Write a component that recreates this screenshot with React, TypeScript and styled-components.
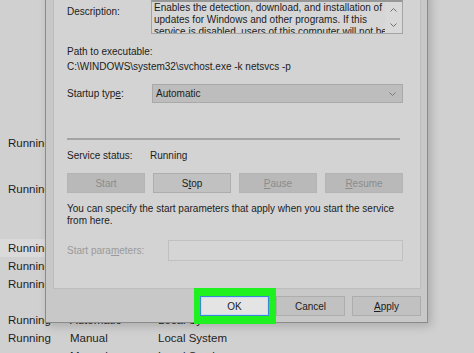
import React from "react";
import styled, { createGlobalStyle } from "styled-components";

const GlobalStyle = createGlobalStyle`
  html, body {
    margin: 0;
    padding: 0;
  }
  body {
    background: #d0d0d0;
    font-family: "Liberation Sans", Arial, sans-serif;
    overflow: hidden;
  }
`;

const Desktop = styled.div`
  position: relative;
  width: 474px;
  height: 353px;
  overflow: hidden;
  background: #d0d0d0;
`;

const ServiceList = styled.div`
  padding-top: 134px;
  width: 428px;
`;

const ServiceRow = styled.div<{ gap: number; selected?: boolean }>`
  display: grid;
  grid-template-columns: 62px 88px 1fr;
  height: 18px;
  align-items: center;
  margin-top: ${(p) => p.gap}px;
  padding-left: 8px;
  font-size: 11.5px;
  color: #1e1e1e;
  white-space: nowrap;
  background: ${(p) => (p.selected ? "#dadada" : "transparent")};
`;

const Dialog = styled.div`
  position: absolute;
  left: 45px;
  top: -10px;
  width: 383px;
  box-sizing: border-box;
  border: 1px solid #8b8b8b;
  background: #c8c8c8;
  padding: 0 6px 0 7px;
  box-shadow: 3px 3px 9px rgba(0, 0, 0, 0.18);
  font-size: 10px;
  color: #1c1c1c;
`;

const Panel = styled.div`
  height: 298px;
  box-sizing: border-box;
  background: #d3d3d3;
  border: 1px solid #bdbdbd;
  border-top: none;
  padding: 9px 16px 0 13px;
  display: flex;
  flex-direction: column;
`;

const Line = styled.div`
  line-height: 12px;
  white-space: nowrap;
`;

const DescRow = styled.div`
  display: flex;
  align-items: flex-start;
`;

const FieldLabel = styled.div<{ width: number; muted?: boolean }>`
  width: ${(p) => p.width}px;
  flex: none;
  line-height: 12px;
  white-space: nowrap;
  color: ${(p) => (p.muted ? "#9a9a9a" : "#1c1c1c")};
`;

const DescLabel = styled(FieldLabel)`
  margin-top: 6px;
`;

const DescBox = styled.div`
  width: 252px;
  height: 34px;
  box-sizing: border-box;
  border: 1px solid #a4a4a4;
  border-top: 2px solid #979797;
  background: #d6d6d6;
  display: flex;
  overflow: hidden;
`;

const DescText = styled.div`
  flex: 1;
  padding: 0 2px;
  overflow: hidden;
`;

const ScrollBar = styled.div`
  width: 17px;
  flex: none;
  background: #d9d9d9;
  display: flex;
  flex-direction: column;
  align-items: center;
  gap: 5px;
  padding-top: 3px;
`;

const PathLabel = styled(Line)`
  margin-top: 12px;
`;

const PathValue = styled(Line)`
  margin-top: 3px;
`;

const StartupRow = styled.div`
  margin-top: 11px;
  height: 19px;
  display: flex;
  align-items: center;
`;

const Select = styled.div`
  width: 251px;
  height: 19px;
  box-sizing: border-box;
  border: 1px solid #a9a9a9;
  background: #bdbdbd;
  display: flex;
  align-items: center;
  justify-content: space-between;
  padding: 0 6px 0 3px;
`;

const Separator = styled.div`
  margin-top: 35px;
  margin-right: 4px;
  height: 2px;
  background: #a3a3a3;
`;

const StatusRow = styled.div`
  margin-top: 10px;
  display: flex;
`;

const ControlRow = styled.div`
  margin-top: 11px;
  display: grid;
  grid-template-columns: repeat(4, 78px);
  gap: 8px;
`;

const Button = styled.div<{ disabled?: boolean; width?: number }>`
  height: 20px;
  width: ${(p) => (p.width ? `${p.width}px` : "auto")};
  box-sizing: border-box;
  border: 1px solid ${(p) => (p.disabled ? "#b4b4b4" : "#adadad")};
  background: ${(p) => (p.disabled ? "#b9b9b9" : "#c1c1c1")};
  color: ${(p) => (p.disabled ? "#8c8c8c" : "#1c1c1c")};
  display: flex;
  align-items: center;
  justify-content: center;
  white-space: nowrap;
`;

const HelpText = styled.div`
  margin-top: 10px;
`;

const ParamsRow = styled.div`
  margin-top: 13px;
  height: 21px;
  display: flex;
  align-items: center;
`;

const ParamsInput = styled.div`
  width: 235px;
  height: 21px;
  box-sizing: border-box;
  border: 1px solid #c0c0c0;
  background: #d5d5d5;
`;

const Footer = styled.div`
  display: flex;
  justify-content: flex-end;
  gap: 7px;
  padding: 7px 0 6px;
`;

const Highlight = styled.div`
  background: #1ff01f;
  margin: -8px -7px -8px -6px;
  padding: 8px 7px 8px 6px;
`;

const DefaultButton = styled(Button)`
  background: #e4e4e4;
  border: 1px solid #3b87d8;
  box-shadow: inset 0 0 0 1px #c9dcf0;
`;

const Chevron = ({ up, color = "#6e6e6e" }: { up?: boolean; color?: string }) => (
  <svg width="7" height="10" viewBox="0 0 7 10">
    <polyline
      points={up ? "0.5,6.5 3.5,3.5 6.5,6.5" : "0.5,3.5 3.5,6.5 6.5,3.5"}
      fill="none"
      stroke={color}
      strokeWidth="1"
    />
  </svg>
);

const services = [
  { gap: 0, status: "Running", startup: "Automatic", logon: "Local System" },
  { gap: 28, status: "Running", startup: "Automatic", logon: "Local System" },
  { gap: 41, status: "Running", startup: "Automatic", logon: "Local System", selected: true },
  { gap: 0, status: "Running", startup: "Automatic", logon: "Local System" },
  { gap: 0, status: "Running", startup: "Automatic", logon: "Local System" },
  { gap: 0, status: "", startup: "Manual", logon: "Local System" },
  { gap: 0, status: "Running", startup: "Automatic", logon: "Local System" },
  { gap: 0, status: "Running", startup: "Manual", logon: "Local System" },
  { gap: 0, status: "", startup: "Manual", logon: "Local Service" },
];

const description = [
  "Enables the detection, download, and installation of",
  "updates for Windows and other programs. If this",
  "service is disabled, users of this computer will not be",
];

const App = () => {
  return (
    <Desktop>
      <GlobalStyle />
      <ServiceList>
        {services.map((s, i) => (
          <ServiceRow key={i} gap={s.gap} selected={s.selected}>
            <span>{s.status}</span>
            <span>{s.startup}</span>
            <span>{s.logon}</span>
          </ServiceRow>
        ))}
      </ServiceList>

      <Dialog>
        <Panel>
          <DescRow>
            <DescLabel width={84}>Description:</DescLabel>
            <DescBox>
              <DescText>
                {description.map((line) => (
                  <Line key={line}>{line}</Line>
                ))}
              </DescText>
              <ScrollBar>
                <Chevron up />
                <Chevron />
              </ScrollBar>
            </DescBox>
          </DescRow>

          <PathLabel>Path to executable:</PathLabel>
          <PathValue>C:\WINDOWS\system32\svchost.exe -k netsvcs -p</PathValue>

          <StartupRow>
            <FieldLabel width={85}>
              Startup typ<u>e</u>:
            </FieldLabel>
            <Select>
              <span>Automatic</span>
              <Chevron color="#7a7a7a" />
            </Select>
          </StartupRow>

          <Separator />

          <StatusRow>
            <FieldLabel width={83}>Service status:</FieldLabel>
            <Line>Running</Line>
          </StatusRow>

          <ControlRow>
            <Button disabled>Start</Button>
            <Button>
              S<u>t</u>op
            </Button>
            <Button disabled>
              <u>P</u>ause
            </Button>
            <Button disabled>
              <u>R</u>esume
            </Button>
          </ControlRow>

          <HelpText>
            <Line>You can specify the start parameters that apply when you start the service</Line>
            <Line>from here.</Line>
          </HelpText>

          <ParamsRow>
            <FieldLabel width={101} muted>
              Start para<u>m</u>eters:
            </FieldLabel>
            <ParamsInput />
          </ParamsRow>
        </Panel>

        <Footer>
          <Highlight>
            <DefaultButton width={69}>OK</DefaultButton>
          </Highlight>
          <Button width={69}>Cancel</Button>
          <Button width={69}>
            <u>A</u>pply
          </Button>
        </Footer>
      </Dialog>
    </Desktop>
  );
};

export default App;
